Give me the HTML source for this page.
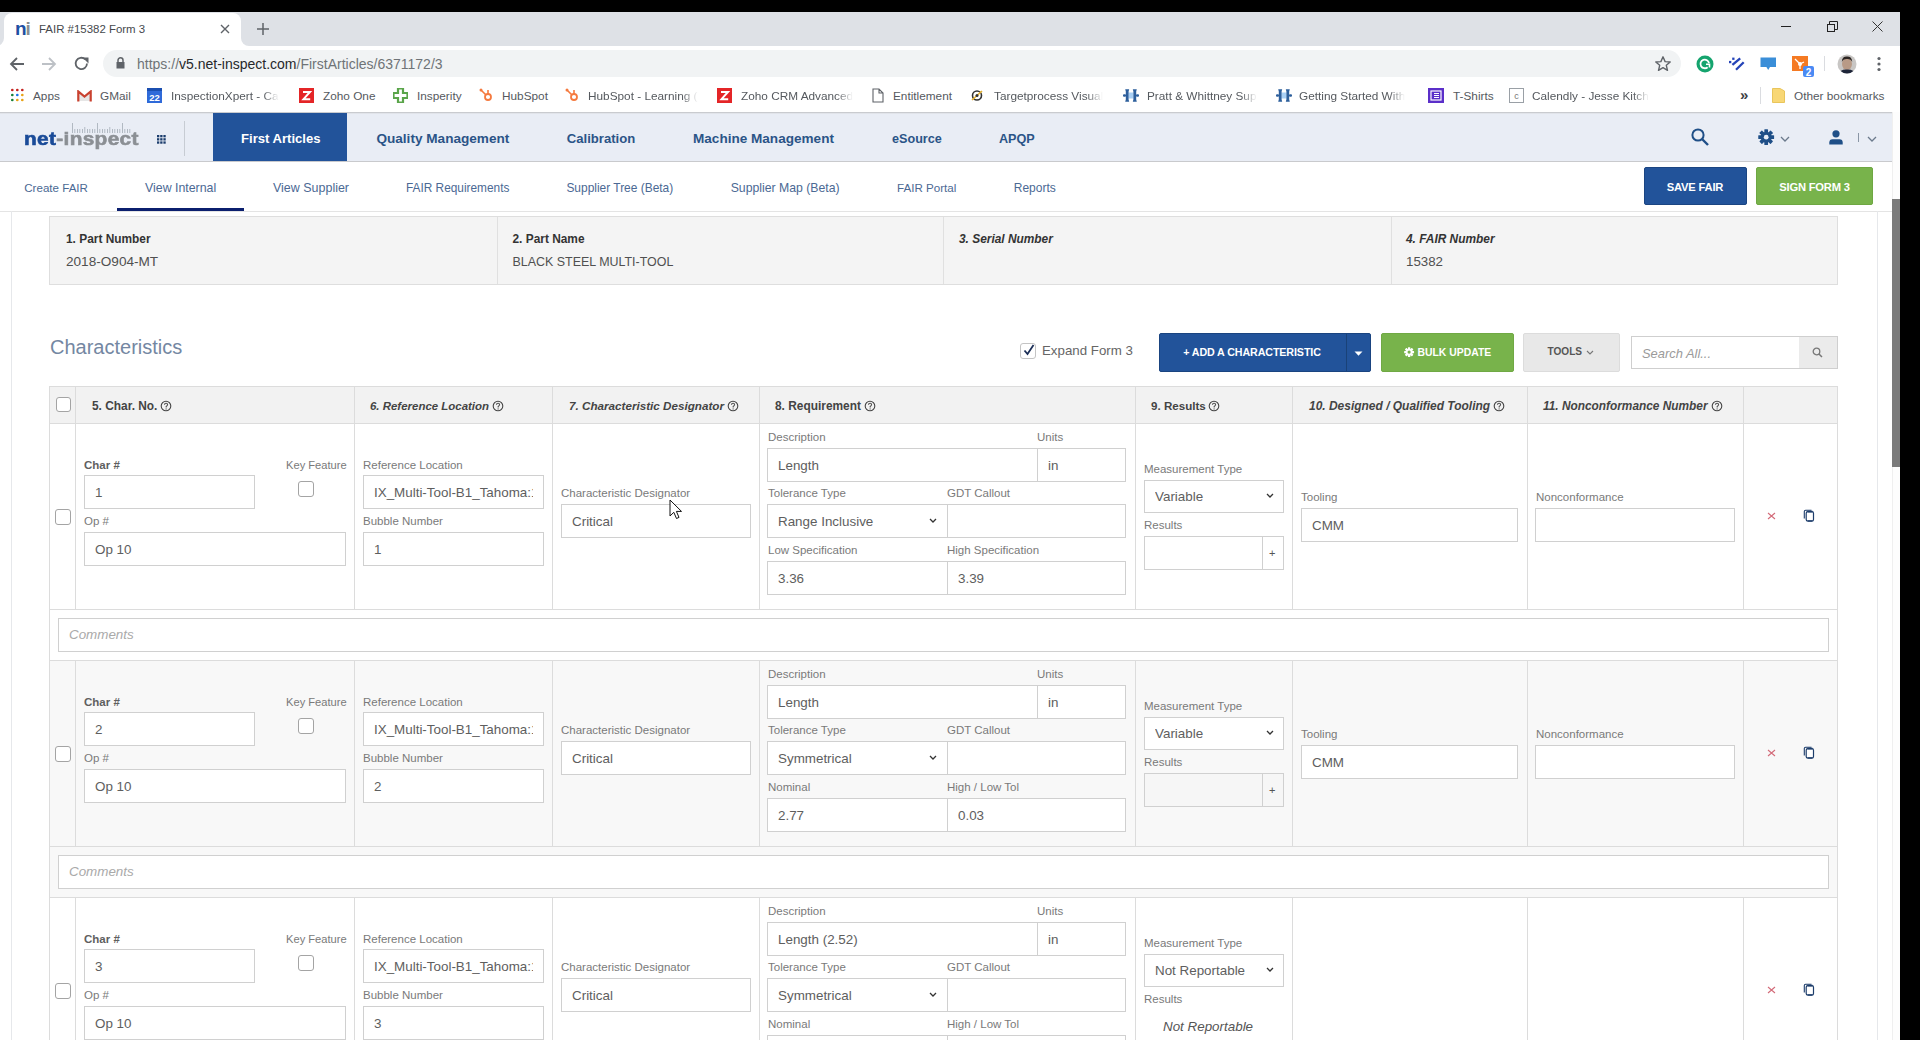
<!DOCTYPE html>
<html><head><meta charset="utf-8"><title>FAIR #15382 Form 3</title>
<style>
html,body{margin:0;padding:0;width:1920px;height:1040px;overflow:hidden;background:#000;font-family:'Liberation Sans', sans-serif;}
#r{position:relative;width:1920px;height:1040px;overflow:hidden;background:#000}
#r div{position:absolute;}
#pg{position:absolute;left:0;top:112px;width:1892px;height:928px;background:#fff}
</style></head><body><div id="r">
<div id="pg"></div>
<div style="left:0px;top:12px;width:1900px;height:34px;background:#dee1e6"></div>
<div style="left:4px;top:13px;width:237px;height:33px;background:#fff;border-radius:8px 8px 0 0"></div>
<div style="left:233px;top:37px;width:16px;height:9px;background:#fff"></div>
<div style="left:241px;top:37px;width:10px;height:9px;background:#dee1e6;border-bottom-left-radius:8px"></div>
<div style="left:0px;top:37px;width:12px;height:9px;background:#fff"></div>
<div style="left:-6px;top:37px;width:10px;height:9px;background:#dee1e6;border-bottom-right-radius:8px"></div>
<div style="left:15px;top:19.0px;line-height:20px;height:20px;font-size:19px;color:#333;font-weight:bold;font-style:normal;white-space:nowrap;letter-spacing:-1px"><span style="color:#1d4fa3">n</span><span style="color:#8a8d91">i</span></div>
<div style="left:39px;top:21.0px;line-height:16px;height:16px;font-size:11.45px;color:#45484c;font-weight:normal;font-style:normal;white-space:nowrap;">FAIR #15382 Form 3</div>
<svg style="position:absolute;left:220px;top:24px;" width="10" height="10" viewBox="0 0 10 10"><path d="M1 1L9 9M9 1L1 9" stroke="#5f6368" stroke-width="1.4"/></svg>
<svg style="position:absolute;left:257px;top:23px;" width="12" height="12" viewBox="0 0 12 12"><path d="M6 0V12M0 6H12" stroke="#5f6368" stroke-width="1.5"/></svg>
<svg style="position:absolute;left:1780px;top:20px;" width="12" height="12" viewBox="0 0 12 12"><path d="M1 6.5H11" stroke="#222" stroke-width="1"/></svg>
<svg style="position:absolute;left:1826px;top:20px;" width="13" height="13" viewBox="0 0 13 13"><rect x="1.5" y="4.5" width="7" height="7" fill="none" stroke="#222" stroke-width="1"/><path d="M3.5 4.5V1.5H11.5V9.5H8.5" fill="none" stroke="#222" stroke-width="1"/></svg>
<svg style="position:absolute;left:1872px;top:21px;" width="11" height="11" viewBox="0 0 11 11"><path d="M0.5 0.5L10.5 10.5M10.5 0.5L0.5 10.5" stroke="#333" stroke-width="1"/></svg>
<div style="left:0px;top:46px;width:1900px;height:34px;background:#fff"></div>
<svg style="position:absolute;left:9px;top:56px;" width="16" height="16" viewBox="0 0 16 16"><path d="M15 8H2M8 2L2 8L8 14" fill="none" stroke="#5f6368" stroke-width="1.8"/></svg>
<svg style="position:absolute;left:41px;top:56px;" width="16" height="16" viewBox="0 0 16 16"><path d="M1 8H14M8 2L14 8L8 14" fill="none" stroke="#bdc1c6" stroke-width="1.8"/></svg>
<svg style="position:absolute;left:73px;top:55px;" width="17" height="17" viewBox="0 0 17 17"><path d="M14 8.5A5.7 5.7 0 1 1 12.2 4.3" fill="none" stroke="#5f6368" stroke-width="1.8"/><path d="M9.5 2.5H15.5V8.5Z" fill="#5f6368"/></svg>
<div style="left:103px;top:50px;width:1578px;height:27px;background:#f1f3f4;border-radius:14px"></div>
<svg style="position:absolute;left:115px;top:56px;" width="11" height="14" viewBox="0 0 11 14"><path d="M3 6V4.2A2.5 2.5 0 0 1 8 4.2V6" fill="none" stroke="#5f6368" stroke-width="1.5"/><rect x="1.5" y="6" width="8" height="6.5" fill="#5f6368"/></svg>
<div style="left:137px;top:54.5px;line-height:18px;height:18px;font-size:14px;color:#333;font-weight:normal;font-style:normal;white-space:nowrap;"><span style="color:#6f7377">https://</span><span style="color:#26282b">v5.net-inspect.com</span><span style="color:#6f7377">/FirstArticles/6371172/3</span></div>
<svg style="position:absolute;left:1654px;top:55px;" width="18" height="18" viewBox="0 0 18 18"><path d="M9 1.8L11.1 6.6L16.2 7L12.3 10.3L13.5 15.3L9 12.6L4.5 15.3L5.7 10.3L1.8 7L6.9 6.6Z" fill="none" stroke="#5f6368" stroke-width="1.4" stroke-linejoin="round"/></svg>
<svg style="position:absolute;left:1696px;top:55px;" width="18" height="18" viewBox="0 0 18 18"><circle cx="9" cy="9" r="8.5" fill="#15a46e"/><path d="M13 8.2A4.3 4.3 0 1 0 11.6 12.2" fill="none" stroke="#fff" stroke-width="1.8"/><path d="M10 9.2H13.5V12.5" fill="none" stroke="#fff" stroke-width="1.6"/></svg>
<svg style="position:absolute;left:1728px;top:56px;" width="18" height="16" viewBox="0 0 18 16"><rect x="4.2" y="1.6" width="2.3" height="2.3" fill="#2544b8"/><rect x="1" y="4.9" width="2.3" height="2.3" fill="#2544b8"/><path d="M4.4 8.9L12.2 2.4M8 13.8L15.7 6.2" stroke="#2544b8" stroke-width="2.3"/></svg>
<svg style="position:absolute;left:1760px;top:57px;" width="17" height="14" viewBox="0 0 17 14"><path d="M0.5 0.5H16V10H10L8.2 13L6.4 10H0.5Z" fill="#3a8ed8"/></svg>
<svg style="position:absolute;left:1792px;top:56px;" width="23" height="21" viewBox="0 0 23 21"><rect x="0" y="0" width="16" height="15" fill="#f57a23"/><path d="M3 3L8 8M8 8L8 13M8 8L12 6" stroke="#fff" stroke-width="1.3"/><circle cx="8" cy="8" r="2" fill="#fff"/><rect x="11" y="10" width="11" height="11" rx="2" fill="#4a8af4"/><text x="16.5" y="19.5" font-size="10" font-weight="bold" fill="#fff" text-anchor="middle" font-family="Liberation Sans">2</text></svg>
<div style="left:1824px;top:56px;width:1px;height:15px;background:#dadce0"></div>
<svg style="position:absolute;left:1837px;top:54px;" width="20" height="20" viewBox="0 0 20 20"><defs><clipPath id="avc"><circle cx="10" cy="10" r="9.5"/></clipPath></defs><g clip-path="url(#avc)"><rect width="20" height="20" fill="#c8c6c4"/><ellipse cx="10" cy="10" rx="5" ry="6" fill="#b89a86"/><path d="M4.8 8Q5 2.5 10 2.6Q15 2.5 15.2 8Q14 4.8 10 5Q6 4.8 4.8 8Z" fill="#2b2421"/><path d="M2 20Q3 15 10 15.5Q17 15 18 20Z" fill="#1d2438"/></g></svg>
<svg style="position:absolute;left:1876px;top:56px;" width="6" height="16" viewBox="0 0 6 16"><circle cx="3" cy="2.5" r="1.6" fill="#5f6368"/><circle cx="3" cy="8" r="1.6" fill="#5f6368"/><circle cx="3" cy="13.5" r="1.6" fill="#5f6368"/></svg>
<div style="left:0px;top:80px;width:1900px;height:32px;background:#fff"></div>
<svg style="position:absolute;left:10px;top:88px;" width="15" height="14" viewBox="0 0 15 14"><circle cx="2.3" cy="2" r="1.35" fill="#c5221f"/><circle cx="7.3" cy="2" r="1.35" fill="#c5221f"/><circle cx="12.3" cy="2" r="1.35" fill="#c5221f"/><circle cx="2.3" cy="7" r="1.35" fill="#188038"/><circle cx="7.3" cy="7" r="1.35" fill="#1a73e8"/><circle cx="12.3" cy="7" r="1.35" fill="#e8a317"/><circle cx="2.3" cy="12" r="1.35" fill="#188038"/><circle cx="7.3" cy="12" r="1.35" fill="#e8a317"/><circle cx="12.3" cy="12" r="1.35" fill="#e8a317"/></svg>
<div style="left:33px;top:87.5px;line-height:16px;height:16px;font-size:11.8px;color:#55595e;font-weight:normal;font-style:normal;white-space:nowrap;">Apps</div>
<svg style="position:absolute;left:77px;top:90px;" width="15" height="12" viewBox="0 0 15 12"><path d="M2 2L7.5 6.8L13 2V11H2Z" fill="#e6e6e6"/><path d="M1.3 11.5V1.5L7.5 6.6L13.7 1.5V11.5" fill="none" stroke="#c9412f" stroke-width="2.2"/></svg>
<div style="left:100px;top:87.5px;line-height:16px;height:16px;font-size:11.8px;color:#55595e;font-weight:normal;font-style:normal;white-space:nowrap;">GMail</div>
<svg style="position:absolute;left:147px;top:88px;" width="15" height="15" viewBox="0 0 15 15"><rect x="0" y="0" width="15" height="15" fill="#2f6ad9"/><rect x="0" y="0" width="15" height="3" fill="#1b4fb0"/><text x="7.5" y="13" font-size="9.5" font-weight="bold" fill="#fff" text-anchor="middle" font-family="Liberation Sans">22</text></svg>
<div style="left:171px;top:87.5px;line-height:16px;height:16px;font-size:11.8px;color:#55595e;font-weight:normal;font-style:normal;white-space:nowrap;-webkit-mask-image:linear-gradient(90deg,#000 calc(100% - 16px),transparent);">InspectionXpert - Ca</div>
<svg style="position:absolute;left:299px;top:88px;" width="15" height="15" viewBox="0 0 15 15"><rect width="15" height="15" fill="#e42527"/><path d="M4 4H11L4.5 11.2H11.2" fill="none" stroke="#fff" stroke-width="2"/></svg>
<div style="left:323px;top:87.5px;line-height:16px;height:16px;font-size:11.8px;color:#55595e;font-weight:normal;font-style:normal;white-space:nowrap;">Zoho One</div>
<svg style="position:absolute;left:393px;top:88px;" width="15" height="15" viewBox="0 0 15 15"><path d="M5 0.5H10V5H14.5V10H10V14.5H5V10H0.5V5H5Z" fill="#fff" stroke="#5aa54a" stroke-width="2.2"/></svg>
<div style="left:417px;top:87.5px;line-height:16px;height:16px;font-size:11.8px;color:#55595e;font-weight:normal;font-style:normal;white-space:nowrap;">Insperity</div>
<svg style="position:absolute;left:479px;top:88px;" width="14" height="15" viewBox="0 0 14 15"><circle cx="9" cy="9" r="3" fill="none" stroke="#f57a3f" stroke-width="1.8"/><path d="M2 2L7 7M9 6V2" stroke="#f57a3f" stroke-width="1.6"/><circle cx="2" cy="2" r="1.5" fill="#f57a3f"/></svg>
<div style="left:502px;top:87.5px;line-height:16px;height:16px;font-size:11.8px;color:#55595e;font-weight:normal;font-style:normal;white-space:nowrap;">HubSpot</div>
<svg style="position:absolute;left:565px;top:88px;" width="14" height="15" viewBox="0 0 14 15"><circle cx="9" cy="9" r="3" fill="none" stroke="#f57a3f" stroke-width="1.8"/><path d="M2 2L7 7M9 6V2" stroke="#f57a3f" stroke-width="1.6"/><circle cx="2" cy="2" r="1.5" fill="#f57a3f"/></svg>
<div style="left:588px;top:87.5px;line-height:16px;height:16px;font-size:11.8px;color:#55595e;font-weight:normal;font-style:normal;white-space:nowrap;-webkit-mask-image:linear-gradient(90deg,#000 calc(100% - 16px),transparent);">HubSpot - Learning (</div>
<svg style="position:absolute;left:717px;top:88px;" width="15" height="15" viewBox="0 0 15 15"><rect width="15" height="15" fill="#e42527"/><path d="M4 4H11L4.5 11.2H11.2" fill="none" stroke="#fff" stroke-width="2"/></svg>
<div style="left:741px;top:87.5px;line-height:16px;height:16px;font-size:11.8px;color:#55595e;font-weight:normal;font-style:normal;white-space:nowrap;-webkit-mask-image:linear-gradient(90deg,#000 calc(100% - 16px),transparent);">Zoho CRM Advanced</div>
<svg style="position:absolute;left:872px;top:88px;" width="12" height="15" viewBox="0 0 12 15"><path d="M1 1H7L11 5V14H1Z M7 1V5H11" fill="none" stroke="#5f6368" stroke-width="1.1"/></svg>
<div style="left:893px;top:87.5px;line-height:16px;height:16px;font-size:11.8px;color:#55595e;font-weight:normal;font-style:normal;white-space:nowrap;">Entitlement</div>
<svg style="position:absolute;left:969px;top:88px;" width="15" height="15" viewBox="0 0 15 15"><circle cx="8" cy="7.5" r="4.5" fill="none" stroke="#333" stroke-width="1.6"/><path d="M3 12L13 3" stroke="#e8b32e" stroke-width="1.6"/><circle cx="8" cy="7.5" r="1.5" fill="#333"/></svg>
<div style="left:994px;top:87.5px;line-height:16px;height:16px;font-size:11.8px;color:#55595e;font-weight:normal;font-style:normal;white-space:nowrap;-webkit-mask-image:linear-gradient(90deg,#000 calc(100% - 16px),transparent);">Targetprocess Visual</div>
<svg style="position:absolute;left:1123px;top:89px;" width="16" height="13" viewBox="0 0 16 13"><rect x="5.5" y="3.5" width="5" height="6" fill="#a9d0f5"/><path d="M2.2 0.3H6.2L5.6 2.5V10.5L6.2 12.7H2.2L2.8 10.5V2.5Z" fill="#2d5f9c"/><path d="M9.8 0.3H13.8L13.2 2.5V10.5L13.8 12.7H9.8L10.4 10.5V2.5Z" fill="#2d5f9c"/><rect x="0" y="5.2" width="3" height="2.6" rx="1" fill="#2d5f9c"/><rect x="13" y="5.2" width="3" height="2.6" rx="1" fill="#2d5f9c"/></svg>
<div style="left:1147px;top:87.5px;line-height:16px;height:16px;font-size:11.8px;color:#55595e;font-weight:normal;font-style:normal;white-space:nowrap;-webkit-mask-image:linear-gradient(90deg,#000 calc(100% - 16px),transparent);">Pratt &amp; Whittney Sup</div>
<svg style="position:absolute;left:1276px;top:89px;" width="16" height="13" viewBox="0 0 16 13"><rect x="5.5" y="3.5" width="5" height="6" fill="#a9d0f5"/><path d="M2.2 0.3H6.2L5.6 2.5V10.5L6.2 12.7H2.2L2.8 10.5V2.5Z" fill="#2d5f9c"/><path d="M9.8 0.3H13.8L13.2 2.5V10.5L13.8 12.7H9.8L10.4 10.5V2.5Z" fill="#2d5f9c"/><rect x="0" y="5.2" width="3" height="2.6" rx="1" fill="#2d5f9c"/><rect x="13" y="5.2" width="3" height="2.6" rx="1" fill="#2d5f9c"/></svg>
<div style="left:1299px;top:87.5px;line-height:16px;height:16px;font-size:11.8px;color:#55595e;font-weight:normal;font-style:normal;white-space:nowrap;-webkit-mask-image:linear-gradient(90deg,#000 calc(100% - 16px),transparent);">Getting Started With</div>
<svg style="position:absolute;left:1428px;top:88px;" width="16" height="15" viewBox="0 0 16 15"><rect width="16" height="15" fill="#5b2fc9"/><rect x="3" y="3" width="10" height="9" fill="none" stroke="#fff" stroke-width="1.2"/><path d="M6 5.5H11M6 7.5H11M6 9.5H11" stroke="#fff" stroke-width="1"/></svg>
<div style="left:1453px;top:87.5px;line-height:16px;height:16px;font-size:11.8px;color:#55595e;font-weight:normal;font-style:normal;white-space:nowrap;">T-Shirts</div>
<svg style="position:absolute;left:1509px;top:88px;" width="15" height="15" viewBox="0 0 15 15"><rect x="0.5" y="0.5" width="14" height="14" fill="none" stroke="#9aa0a6" stroke-width="1"/><text x="7.5" y="11" font-size="9" fill="#777" text-anchor="middle" font-family="Liberation Sans">c</text></svg>
<div style="left:1532px;top:87.5px;line-height:16px;height:16px;font-size:11.8px;color:#55595e;font-weight:normal;font-style:normal;white-space:nowrap;-webkit-mask-image:linear-gradient(90deg,#000 calc(100% - 16px),transparent);">Calendly - Jesse Kitch</div>
<div style="left:1740px;top:87.0px;line-height:16px;height:16px;font-size:15px;color:#3c4043;font-weight:bold;font-style:normal;white-space:nowrap;">&raquo;</div>
<div style="left:1760px;top:87px;width:1px;height:17px;background:#dadce0"></div>
<svg style="position:absolute;left:1772px;top:88px;" width="13" height="15" viewBox="0 0 13 15"><path d="M0.5 0.5H8L12.5 3V14.5H0.5Z" fill="#f8d775" stroke="#e9c55b" stroke-width="1"/></svg>
<div style="left:1794px;top:87.5px;line-height:16px;height:16px;font-size:11.8px;color:#55595e;font-weight:normal;font-style:normal;white-space:nowrap;">Other bookmarks</div>
<div style="left:0px;top:112px;width:1892px;height:50px;background:#e9edf5;border-top:1px solid #c9cbcf;border-bottom:1px solid #c9cacd;box-sizing:border-box;box-shadow:inset 0 1px 0 #e1e4ea"></div>
<svg style="position:absolute;left:70px;top:123px;" width="62" height="10" viewBox="0 0 62 10"><rect x="2.0" y="0" width="0.7" height="10" fill="#9aa3ad"/><rect x="4.5" y="6" width="0.7" height="4" fill="#9aa3ad"/><rect x="7.0" y="6" width="0.7" height="4" fill="#9aa3ad"/><rect x="9.5" y="6" width="0.7" height="4" fill="#9aa3ad"/><rect x="12.0" y="6" width="0.7" height="4" fill="#9aa3ad"/><rect x="14.5" y="4" width="0.7" height="6" fill="#9aa3ad"/><rect x="17.0" y="6" width="0.7" height="4" fill="#9aa3ad"/><rect x="19.5" y="6" width="0.7" height="4" fill="#9aa3ad"/><rect x="22.0" y="6" width="0.7" height="4" fill="#9aa3ad"/><rect x="24.5" y="6" width="0.7" height="4" fill="#9aa3ad"/><rect x="27.0" y="0" width="0.7" height="10" fill="#9aa3ad"/><rect x="29.5" y="6" width="0.7" height="4" fill="#9aa3ad"/><rect x="32.0" y="6" width="0.7" height="4" fill="#9aa3ad"/><rect x="34.5" y="6" width="0.7" height="4" fill="#9aa3ad"/><rect x="37.0" y="6" width="0.7" height="4" fill="#9aa3ad"/><rect x="39.5" y="4" width="0.7" height="6" fill="#9aa3ad"/><rect x="42.0" y="6" width="0.7" height="4" fill="#9aa3ad"/><rect x="44.5" y="6" width="0.7" height="4" fill="#9aa3ad"/><rect x="47.0" y="6" width="0.7" height="4" fill="#9aa3ad"/><rect x="49.5" y="6" width="0.7" height="4" fill="#9aa3ad"/><rect x="52.0" y="0" width="0.7" height="10" fill="#9aa3ad"/><rect x="54.5" y="6" width="0.7" height="4" fill="#9aa3ad"/><rect x="57.0" y="6" width="0.7" height="4" fill="#9aa3ad"/><rect x="59.5" y="6" width="0.7" height="4" fill="#9aa3ad"/></svg>
<div style="left:24px;top:127.0px;line-height:24px;height:24px;font-size:18.6px;color:#333;font-weight:bold;font-style:normal;white-space:nowrap;letter-spacing:0.3px;transform:scaleX(1.12);transform-origin:0 50%;-webkit-text-stroke:0.5px currentColor"><span style="color:#1a4b98;-webkit-text-stroke:0.6px #1a4b98">net</span><span style="color:#8b8f94;-webkit-text-stroke:0.6px #8b8f94">-inspect</span></div>
<svg style="position:absolute;left:157px;top:135px;" width="10" height="10" viewBox="0 0 10 10"><rect x="0.0" y="0.0" width="2.3" height="2.3" fill="#1b3d6d"/><rect x="3.2" y="0.0" width="2.3" height="2.3" fill="#1b3d6d"/><rect x="6.4" y="0.0" width="2.3" height="2.3" fill="#1b3d6d"/><rect x="0.0" y="3.2" width="2.3" height="2.3" fill="#1b3d6d"/><rect x="3.2" y="3.2" width="2.3" height="2.3" fill="#1b3d6d"/><rect x="6.4" y="3.2" width="2.3" height="2.3" fill="#1b3d6d"/><rect x="0.0" y="6.4" width="2.3" height="2.3" fill="#1b3d6d"/><rect x="3.2" y="6.4" width="2.3" height="2.3" fill="#1b3d6d"/><rect x="6.4" y="6.4" width="2.3" height="2.3" fill="#1b3d6d"/></svg>
<div style="left:184px;top:121px;width:1px;height:35px;background:#c7ccd3"></div>
<div style="left:213px;top:113px;width:134px;height:48px;background:#22539a"></div>
<div style="left:241px;top:129.7px;line-height:18px;height:18px;font-size:13.1px;color:#fff;font-weight:bold;font-style:normal;white-space:nowrap;">First Articles</div>
<div style="left:376.4px;top:129.7px;line-height:18px;height:18px;font-size:13.6px;color:#2b5487;font-weight:bold;font-style:normal;white-space:nowrap;">Quality Management</div>
<div style="left:566.8px;top:129.7px;line-height:18px;height:18px;font-size:13.12px;color:#2b5487;font-weight:bold;font-style:normal;white-space:nowrap;">Calibration</div>
<div style="left:693px;top:129.7px;line-height:18px;height:18px;font-size:13.57px;color:#2b5487;font-weight:bold;font-style:normal;white-space:nowrap;">Machine Management</div>
<div style="left:892px;top:129.7px;line-height:18px;height:18px;font-size:12.62px;color:#2b5487;font-weight:bold;font-style:normal;white-space:nowrap;">eSource</div>
<div style="left:999px;top:129.7px;line-height:18px;height:18px;font-size:12.63px;color:#2b5487;font-weight:bold;font-style:normal;white-space:nowrap;">APQP</div>
<svg style="position:absolute;left:1691px;top:128px;" width="19" height="19" viewBox="0 0 19 19"><circle cx="7" cy="7" r="5.6" fill="none" stroke="#1f4f87" stroke-width="2"/><path d="M11 11L17 17" stroke="#1f4f87" stroke-width="2.4"/></svg>
<svg style="position:absolute;left:1758px;top:128.5px;" width="19" height="19" viewBox="0 0 19 19"><g transform="scale(0.88)"><rect x="7.2" y="0.3" width="4.2" height="4" rx="0.6" fill="#1f4f87" transform="rotate(0 9.3 9.3)"/><rect x="7.2" y="0.3" width="4.2" height="4" rx="0.6" fill="#1f4f87" transform="rotate(45 9.3 9.3)"/><rect x="7.2" y="0.3" width="4.2" height="4" rx="0.6" fill="#1f4f87" transform="rotate(90 9.3 9.3)"/><rect x="7.2" y="0.3" width="4.2" height="4" rx="0.6" fill="#1f4f87" transform="rotate(135 9.3 9.3)"/><rect x="7.2" y="0.3" width="4.2" height="4" rx="0.6" fill="#1f4f87" transform="rotate(180 9.3 9.3)"/><rect x="7.2" y="0.3" width="4.2" height="4" rx="0.6" fill="#1f4f87" transform="rotate(225 9.3 9.3)"/><rect x="7.2" y="0.3" width="4.2" height="4" rx="0.6" fill="#1f4f87" transform="rotate(270 9.3 9.3)"/><rect x="7.2" y="0.3" width="4.2" height="4" rx="0.6" fill="#1f4f87" transform="rotate(315 9.3 9.3)"/><circle cx="9.3" cy="9.3" r="6.3" fill="#1f4f87"/><circle cx="9.3" cy="9.3" r="2.7" fill="#e9eef5"/></g></svg>
<svg style="position:absolute;left:1780px;top:136px;" width="10" height="6" viewBox="0 0 10 6"><path d="M1 1L5 5L9 1" fill="none" stroke="#6b7a8c" stroke-width="1.3"/></svg>
<svg style="position:absolute;left:1828px;top:129px;" width="16" height="16" viewBox="0 0 16 16"><circle cx="8" cy="4.8" r="3.6" fill="#1f4f87"/><path d="M1.3 15.5V13.6Q1.3 10.2 4.5 10.2H11.5Q14.7 10.2 14.7 13.6V15.5Z" fill="#1f4f87"/></svg>
<div style="left:1858px;top:133px;width:1px;height:9px;background:#8a96a5"></div>
<svg style="position:absolute;left:1867px;top:136px;" width="10" height="6" viewBox="0 0 10 6"><path d="M1 1L5 5L9 1" fill="none" stroke="#6b7a8c" stroke-width="1.3"/></svg>
<div style="left:0px;top:162px;width:1892px;height:50px;background:#fff;border-bottom:1px solid #e4e4e4;box-sizing:border-box"></div>
<div style="left:24.25px;top:179.8px;line-height:16px;height:16px;font-size:11.59px;color:#4b6994;font-weight:normal;font-style:normal;white-space:nowrap;">Create FAIR</div>
<div style="left:145px;top:179.8px;line-height:16px;height:16px;font-size:12.36px;color:#4b6994;font-weight:normal;font-style:normal;white-space:nowrap;">View Internal</div>
<div style="left:273px;top:179.8px;line-height:16px;height:16px;font-size:12.47px;color:#4b6994;font-weight:normal;font-style:normal;white-space:nowrap;">View Supplier</div>
<div style="left:406px;top:179.8px;line-height:16px;height:16px;font-size:11.85px;color:#4b6994;font-weight:normal;font-style:normal;white-space:nowrap;">FAIR Requirements</div>
<div style="left:566.4px;top:179.8px;line-height:16px;height:16px;font-size:11.95px;color:#4b6994;font-weight:normal;font-style:normal;white-space:nowrap;">Supplier Tree (Beta)</div>
<div style="left:730.7px;top:179.8px;line-height:16px;height:16px;font-size:12.25px;color:#4b6994;font-weight:normal;font-style:normal;white-space:nowrap;">Supplier Map (Beta)</div>
<div style="left:897px;top:179.8px;line-height:16px;height:16px;font-size:11.62px;color:#4b6994;font-weight:normal;font-style:normal;white-space:nowrap;">FAIR Portal</div>
<div style="left:1013.8px;top:179.8px;line-height:16px;height:16px;font-size:11.99px;color:#4b6994;font-weight:normal;font-style:normal;white-space:nowrap;">Reports</div>
<div style="left:117px;top:208px;width:127px;height:3px;background:#0b1f6e"></div>
<div style="left:1643.5px;top:167px;width:103px;height:38px;background:#22539a;border:1px solid #1b4582;box-sizing:border-box;border-radius:2px"></div>
<div style="left:1643.5px;top:178.8px;line-height:16px;height:16px;font-size:11.2px;color:#fff;font-weight:bold;font-style:normal;white-space:nowrap;width:103px;text-align:center;letter-spacing:-0.2px">SAVE FAIR</div>
<div style="left:1756px;top:167px;width:117px;height:38px;background:#78b34b;border:1px solid #6ea742;box-sizing:border-box;border-radius:2px"></div>
<div style="left:1756px;top:178.8px;line-height:16px;height:16px;font-size:11.2px;color:#fff;font-weight:bold;font-style:normal;white-space:nowrap;width:117px;text-align:center;letter-spacing:-0.2px">SIGN FORM 3</div>
<div style="left:1892px;top:112px;width:8px;height:928px;background:#fdfdfd;box-shadow:inset 1px 0 0 #efefef"></div>
<div style="left:1892px;top:199px;width:8px;height:268px;background:#7b7b7b"></div>
<div style="left:11px;top:211px;width:1px;height:829px;background:#e6e8eb"></div>
<div style="left:1877px;top:211px;width:1px;height:829px;background:#e6e8eb"></div>
<div style="left:49px;top:216px;width:1789px;height:69px;background:#f4f4f4;border:1px solid #dedede;box-sizing:border-box"></div>
<div style="left:497px;top:217px;width:1px;height:67px;background:#e0e0e0"></div>
<div style="left:943px;top:217px;width:1px;height:67px;background:#e0e0e0"></div>
<div style="left:1391px;top:217px;width:1px;height:67px;background:#e0e0e0"></div>
<div style="left:66px;top:231.0px;line-height:16px;height:16px;font-size:11.9px;color:#333;font-weight:bold;font-style:normal;white-space:nowrap;">1. Part Number</div>
<div style="left:66px;top:254.0px;line-height:16px;height:16px;font-size:13.6px;color:#505050;font-weight:normal;font-style:normal;white-space:nowrap;">2018-O904-MT</div>
<div style="left:512.5px;top:231.0px;line-height:16px;height:16px;font-size:11.9px;color:#333;font-weight:bold;font-style:normal;white-space:nowrap;">2. Part Name</div>
<div style="left:512.5px;top:254.0px;line-height:16px;height:16px;font-size:12.45px;color:#505050;font-weight:normal;font-style:normal;white-space:nowrap;">BLACK STEEL MULTI-TOOL</div>
<div style="left:959px;top:231.0px;line-height:16px;height:16px;font-size:11.9px;color:#333;font-weight:bold;font-style:italic;white-space:nowrap;">3. Serial Number</div>
<div style="left:1406px;top:231.0px;line-height:16px;height:16px;font-size:11.9px;color:#333;font-weight:bold;font-style:italic;white-space:nowrap;">4. FAIR Number</div>
<div style="left:1406px;top:254.0px;line-height:16px;height:16px;font-size:13.3px;color:#505050;font-weight:normal;font-style:normal;white-space:nowrap;">15382</div>
<div style="left:50px;top:334.0px;line-height:26px;height:26px;font-size:20px;color:#7487a2;font-weight:normal;font-style:normal;white-space:nowrap;">Characteristics</div>
<div style="left:1020px;top:343px;width:16px;height:16px;background:#fff;border:1px solid #c4c4c4;border-radius:3px;box-sizing:border-box"></div>
<svg style="position:absolute;left:1022px;top:342px;" width="14" height="15" viewBox="0 0 14 15"><path d="M2.5 8.5L5.5 12L11.5 3" fill="none" stroke="#1c2f58" stroke-width="1.8"/></svg>
<div style="left:1042px;top:342.0px;line-height:18px;height:18px;font-size:13.3px;color:#666;font-weight:normal;font-style:normal;white-space:nowrap;">Expand Form 3</div>
<div style="left:1158.5px;top:333px;width:212.5px;height:38.5px;background:#22539a;border:1px solid #1a4480;box-sizing:border-box;border-radius:2px"></div>
<div style="left:1345.5px;top:334px;width:1px;height:36.5px;background:#1a4278"></div>
<div style="left:1158.5px;top:345.0px;line-height:14px;height:14px;font-size:10.7px;color:#fff;font-weight:bold;font-style:normal;white-space:nowrap;width:187px;text-align:center;letter-spacing:-0.1px">+ ADD A CHARACTERISTIC</div>
<svg style="position:absolute;left:1354px;top:351px;" width="9" height="5" viewBox="0 0 9 5"><path d="M0.5 0.5H8.5L4.5 4.8Z" fill="#fff"/></svg>
<div style="left:1380.5px;top:333px;width:133.5px;height:38.5px;background:#78b34b;border:1px solid #70a944;box-sizing:border-box;border-radius:2px"></div>
<svg style="position:absolute;left:1404px;top:347px;" width="11" height="11" viewBox="0 0 11 11"><g transform="scale(0.55)"><rect x="7.2" y="0.3" width="4.2" height="4" rx="0.6" fill="#fff" transform="rotate(0 9.3 9.3)"/><rect x="7.2" y="0.3" width="4.2" height="4" rx="0.6" fill="#fff" transform="rotate(45 9.3 9.3)"/><rect x="7.2" y="0.3" width="4.2" height="4" rx="0.6" fill="#fff" transform="rotate(90 9.3 9.3)"/><rect x="7.2" y="0.3" width="4.2" height="4" rx="0.6" fill="#fff" transform="rotate(135 9.3 9.3)"/><rect x="7.2" y="0.3" width="4.2" height="4" rx="0.6" fill="#fff" transform="rotate(180 9.3 9.3)"/><rect x="7.2" y="0.3" width="4.2" height="4" rx="0.6" fill="#fff" transform="rotate(225 9.3 9.3)"/><rect x="7.2" y="0.3" width="4.2" height="4" rx="0.6" fill="#fff" transform="rotate(270 9.3 9.3)"/><rect x="7.2" y="0.3" width="4.2" height="4" rx="0.6" fill="#fff" transform="rotate(315 9.3 9.3)"/><circle cx="9.3" cy="9.3" r="6.3" fill="#fff"/><circle cx="9.3" cy="9.3" r="2.9" fill="#78b34b"/></g></svg>
<div style="left:1417.5px;top:345.7px;line-height:14px;height:14px;font-size:10.4px;color:#fff;font-weight:bold;font-style:normal;white-space:nowrap;">BULK UPDATE</div>
<div style="left:1523px;top:333px;width:96.5px;height:38.5px;background:#e8e8e8;border:1px solid #dcdcdc;box-sizing:border-box;border-radius:2px"></div>
<div style="left:1547.5px;top:345.0px;line-height:14px;height:14px;font-size:10.1px;color:#555;font-weight:bold;font-style:normal;white-space:nowrap;">TOOLS</div>
<svg style="position:absolute;left:1586px;top:350px;" width="8" height="5" viewBox="0 0 8 5"><path d="M1 1L4 4L7 1" fill="none" stroke="#777" stroke-width="1.1"/></svg>
<div style="left:1630.5px;top:335.5px;width:169px;height:33px;background:#fff;border:1px solid #cfcfcf;box-sizing:border-box"></div>
<div style="left:1642px;top:345.0px;line-height:18px;height:18px;font-size:12.9px;color:#9a9a9a;font-weight:normal;font-style:italic;white-space:nowrap;">Search All...</div>
<div style="left:1799px;top:335.5px;width:39px;height:33px;background:#ebebeb;border:1px solid #cfcfcf;border-left:none;box-sizing:border-box"></div>
<svg style="position:absolute;left:1812px;top:347px;" width="11" height="11" viewBox="0 0 11 11"><circle cx="4.5" cy="4.5" r="3.3" fill="none" stroke="#777" stroke-width="1.3"/><path d="M7 7L10 10" stroke="#777" stroke-width="1.5"/></svg>
<div style="left:49px;top:386px;width:1789px;height:38px;background:#f2f2f2;border:1px solid #dcdcdc;box-sizing:border-box"></div>
<div style="left:75px;top:387px;width:1px;height:37px;background:#dcdcdc"></div>
<div style="left:354px;top:387px;width:1px;height:37px;background:#dcdcdc"></div>
<div style="left:552px;top:387px;width:1px;height:37px;background:#dcdcdc"></div>
<div style="left:759px;top:387px;width:1px;height:37px;background:#dcdcdc"></div>
<div style="left:1135px;top:387px;width:1px;height:37px;background:#dcdcdc"></div>
<div style="left:1292px;top:387px;width:1px;height:37px;background:#dcdcdc"></div>
<div style="left:1527px;top:387px;width:1px;height:37px;background:#dcdcdc"></div>
<div style="left:1743px;top:387px;width:1px;height:37px;background:#dcdcdc"></div>
<div style="left:56px;top:397px;width:15px;height:15px;background:#fff;border:1px solid #a4a4a4;border-radius:3px;box-sizing:border-box"></div>
<div style="left:92px;top:398.0px;line-height:16px;height:16px;font-size:11.9px;color:#444;font-weight:bold;font-style:normal;white-space:nowrap;">5. Char. No.</div>
<svg style="position:absolute;left:159.5px;top:400px;" width="12" height="12" viewBox="0 0 12 12"><circle cx="6" cy="6" r="4.8" fill="none" stroke="#444" stroke-width="1.1"/><path d="M4.5 4.8Q4.5 3.3 6.1 3.3Q7.6 3.3 7.6 4.6Q7.6 5.6 6.2 6.4V7.6" fill="none" stroke="#555" stroke-width="1.1"/><circle cx="6.1" cy="8.9" r="0.6" fill="#555"/></svg>
<div style="left:370px;top:398.0px;line-height:16px;height:16px;font-size:11.46px;color:#444;font-weight:bold;font-style:italic;white-space:nowrap;">6. Reference Location</div>
<svg style="position:absolute;left:492px;top:400px;" width="12" height="12" viewBox="0 0 12 12"><circle cx="6" cy="6" r="4.8" fill="none" stroke="#444" stroke-width="1.1"/><path d="M4.5 4.8Q4.5 3.3 6.1 3.3Q7.6 3.3 7.6 4.6Q7.6 5.6 6.2 6.4V7.6" fill="none" stroke="#555" stroke-width="1.1"/><circle cx="6.1" cy="8.9" r="0.6" fill="#555"/></svg>
<div style="left:569px;top:398.0px;line-height:16px;height:16px;font-size:11.68px;color:#444;font-weight:bold;font-style:italic;white-space:nowrap;">7. Characteristic Designator</div>
<svg style="position:absolute;left:727.2px;top:400px;" width="12" height="12" viewBox="0 0 12 12"><circle cx="6" cy="6" r="4.8" fill="none" stroke="#444" stroke-width="1.1"/><path d="M4.5 4.8Q4.5 3.3 6.1 3.3Q7.6 3.3 7.6 4.6Q7.6 5.6 6.2 6.4V7.6" fill="none" stroke="#555" stroke-width="1.1"/><circle cx="6.1" cy="8.9" r="0.6" fill="#555"/></svg>
<div style="left:775px;top:398.0px;line-height:16px;height:16px;font-size:11.9px;color:#444;font-weight:bold;font-style:normal;white-space:nowrap;">8. Requirement</div>
<svg style="position:absolute;left:863.8px;top:400px;" width="12" height="12" viewBox="0 0 12 12"><circle cx="6" cy="6" r="4.8" fill="none" stroke="#444" stroke-width="1.1"/><path d="M4.5 4.8Q4.5 3.3 6.1 3.3Q7.6 3.3 7.6 4.6Q7.6 5.6 6.2 6.4V7.6" fill="none" stroke="#555" stroke-width="1.1"/><circle cx="6.1" cy="8.9" r="0.6" fill="#555"/></svg>
<div style="left:1151px;top:398.0px;line-height:16px;height:16px;font-size:11.6px;color:#444;font-weight:bold;font-style:normal;white-space:nowrap;">9. Results</div>
<svg style="position:absolute;left:1207.6px;top:400px;" width="12" height="12" viewBox="0 0 12 12"><circle cx="6" cy="6" r="4.8" fill="none" stroke="#444" stroke-width="1.1"/><path d="M4.5 4.8Q4.5 3.3 6.1 3.3Q7.6 3.3 7.6 4.6Q7.6 5.6 6.2 6.4V7.6" fill="none" stroke="#555" stroke-width="1.1"/><circle cx="6.1" cy="8.9" r="0.6" fill="#555"/></svg>
<div style="left:1309px;top:398.0px;line-height:16px;height:16px;font-size:11.97px;color:#444;font-weight:bold;font-style:italic;white-space:nowrap;">10. Designed / Qualified Tooling</div>
<svg style="position:absolute;left:1493.3px;top:400px;" width="12" height="12" viewBox="0 0 12 12"><circle cx="6" cy="6" r="4.8" fill="none" stroke="#444" stroke-width="1.1"/><path d="M4.5 4.8Q4.5 3.3 6.1 3.3Q7.6 3.3 7.6 4.6Q7.6 5.6 6.2 6.4V7.6" fill="none" stroke="#555" stroke-width="1.1"/><circle cx="6.1" cy="8.9" r="0.6" fill="#555"/></svg>
<div style="left:1543px;top:398.0px;line-height:16px;height:16px;font-size:11.86px;color:#444;font-weight:bold;font-style:italic;white-space:nowrap;">11. Nonconformance Number</div>
<svg style="position:absolute;left:1710.5px;top:400px;" width="12" height="12" viewBox="0 0 12 12"><circle cx="6" cy="6" r="4.8" fill="none" stroke="#444" stroke-width="1.1"/><path d="M4.5 4.8Q4.5 3.3 6.1 3.3Q7.6 3.3 7.6 4.6Q7.6 5.6 6.2 6.4V7.6" fill="none" stroke="#555" stroke-width="1.1"/><circle cx="6.1" cy="8.9" r="0.6" fill="#555"/></svg>
<div style="left:49px;top:424px;width:1789px;height:186px;background:#fff;border-left:1px solid #dcdcdc;border-right:1px solid #dcdcdc;border-bottom:1px solid #dcdcdc;box-sizing:border-box"></div>
<div style="left:75px;top:424px;width:1px;height:186px;background:#dcdcdc"></div>
<div style="left:354px;top:424px;width:1px;height:186px;background:#dcdcdc"></div>
<div style="left:552px;top:424px;width:1px;height:186px;background:#dcdcdc"></div>
<div style="left:759px;top:424px;width:1px;height:186px;background:#dcdcdc"></div>
<div style="left:1135px;top:424px;width:1px;height:186px;background:#dcdcdc"></div>
<div style="left:1292px;top:424px;width:1px;height:186px;background:#dcdcdc"></div>
<div style="left:1527px;top:424px;width:1px;height:186px;background:#dcdcdc"></div>
<div style="left:1743px;top:424px;width:1px;height:186px;background:#dcdcdc"></div>
<div style="left:55px;top:509px;width:16px;height:16px;background:#fff;border:1px solid #a4a4a4;border-radius:3px;box-sizing:border-box"></div>
<div style="left:84px;top:458.1px;line-height:15px;height:15px;font-size:11.5px;color:#5f5f5f;font-weight:bold;font-style:normal;white-space:nowrap;">Char #</div>
<div style="left:286px;top:458.1px;line-height:15px;height:15px;font-size:11.15px;color:#7a7a7a;font-weight:normal;font-style:normal;white-space:nowrap;">Key Feature</div>
<div style="left:84px;top:475px;width:171px;height:34px;background:#fff;border:1px solid #d0d0d0;box-sizing:border-box;"></div>
<div style="left:95px;top:483.6px;line-height:18px;height:18px;font-size:13.4px;color:#5e5e5e;font-weight:normal;font-style:normal;white-space:nowrap;overflow:hidden;width:153px">1</div>
<div style="left:298px;top:481px;width:16px;height:16px;background:#fff;border:1px solid #a4a4a4;border-radius:3px;box-sizing:border-box"></div>
<div style="left:84px;top:514.1px;line-height:15px;height:15px;font-size:11.5px;color:#7a7a7a;font-weight:normal;font-style:normal;white-space:nowrap;">Op #</div>
<div style="left:84px;top:532px;width:262px;height:34px;background:#fff;border:1px solid #d0d0d0;box-sizing:border-box;"></div>
<div style="left:95px;top:540.6px;line-height:18px;height:18px;font-size:13.4px;color:#5e5e5e;font-weight:normal;font-style:normal;white-space:nowrap;overflow:hidden;width:244px">Op 10</div>
<div style="left:363px;top:458.1px;line-height:15px;height:15px;font-size:11.5px;color:#7a7a7a;font-weight:normal;font-style:normal;white-space:nowrap;">Reference Location</div>
<div style="left:363px;top:475px;width:181px;height:34px;background:#fff;border:1px solid #d0d0d0;box-sizing:border-box;"></div>
<div style="left:374px;top:483.6px;line-height:18px;height:18px;font-size:13.4px;color:#5e5e5e;font-weight:normal;font-style:normal;white-space:nowrap;overflow:hidden;width:159px">IX_Multi-Tool-B1_Tahoma:1</div>
<div style="left:363px;top:514.1px;line-height:15px;height:15px;font-size:11.5px;color:#7a7a7a;font-weight:normal;font-style:normal;white-space:nowrap;">Bubble Number</div>
<div style="left:363px;top:532px;width:181px;height:34px;background:#fff;border:1px solid #d0d0d0;box-sizing:border-box;"></div>
<div style="left:374px;top:540.6px;line-height:18px;height:18px;font-size:13.4px;color:#5e5e5e;font-weight:normal;font-style:normal;white-space:nowrap;overflow:hidden;width:163px">1</div>
<div style="left:561px;top:486.1px;line-height:15px;height:15px;font-size:11.5px;color:#7a7a7a;font-weight:normal;font-style:normal;white-space:nowrap;">Characteristic Designator</div>
<div style="left:561px;top:504px;width:190px;height:34px;background:#fff;border:1px solid #d0d0d0;box-sizing:border-box;"></div>
<div style="left:572px;top:512.6px;line-height:18px;height:18px;font-size:13.4px;color:#5e5e5e;font-weight:normal;font-style:normal;white-space:nowrap;overflow:hidden;width:172px">Critical</div>
<div style="left:768px;top:430.1px;line-height:15px;height:15px;font-size:11.5px;color:#7a7a7a;font-weight:normal;font-style:normal;white-space:nowrap;">Description</div>
<div style="left:1037px;top:430.1px;line-height:15px;height:15px;font-size:11.5px;color:#7a7a7a;font-weight:normal;font-style:normal;white-space:nowrap;">Units</div>
<div style="left:767px;top:448px;width:271px;height:34px;background:#fff;border:1px solid #d0d0d0;box-sizing:border-box;"></div>
<div style="left:778px;top:456.6px;line-height:18px;height:18px;font-size:13.4px;color:#5e5e5e;font-weight:normal;font-style:normal;white-space:nowrap;overflow:hidden;width:253px">Length</div>
<div style="left:1037px;top:448px;width:89px;height:34px;background:#fff;border:1px solid #d0d0d0;box-sizing:border-box;"></div>
<div style="left:1048px;top:456.6px;line-height:18px;height:18px;font-size:13.4px;color:#5e5e5e;font-weight:normal;font-style:normal;white-space:nowrap;overflow:hidden;width:71px">in</div>
<div style="left:768px;top:486.1px;line-height:15px;height:15px;font-size:11.5px;color:#7a7a7a;font-weight:normal;font-style:normal;white-space:nowrap;">Tolerance Type</div>
<div style="left:947px;top:486.1px;line-height:15px;height:15px;font-size:11.5px;color:#7a7a7a;font-weight:normal;font-style:normal;white-space:nowrap;">GDT Callout</div>
<div style="left:767px;top:504px;width:181px;height:34px;background:#fff;border:1px solid #d0d0d0;box-sizing:border-box;"></div>
<div style="left:778px;top:512.6px;line-height:18px;height:18px;font-size:13.4px;color:#5e5e5e;font-weight:normal;font-style:normal;white-space:nowrap;overflow:hidden;width:163px">Range Inclusive</div>
<svg style="position:absolute;left:929px;top:518px;" width="8" height="6" viewBox="0 0 8 6"><path d="M1 1L4 4L7 1" fill="none" stroke="#333" stroke-width="1.3"/></svg>
<div style="left:947px;top:504px;width:179px;height:34px;background:#fff;border:1px solid #d0d0d0;box-sizing:border-box;"></div>
<div style="left:768px;top:543.1px;line-height:15px;height:15px;font-size:11.5px;color:#7a7a7a;font-weight:normal;font-style:normal;white-space:nowrap;">Low Specification</div>
<div style="left:947px;top:543.1px;line-height:15px;height:15px;font-size:11.5px;color:#7a7a7a;font-weight:normal;font-style:normal;white-space:nowrap;">High Specification</div>
<div style="left:767px;top:561px;width:181px;height:34px;background:#fff;border:1px solid #d0d0d0;box-sizing:border-box;"></div>
<div style="left:778px;top:569.6px;line-height:18px;height:18px;font-size:13.4px;color:#5e5e5e;font-weight:normal;font-style:normal;white-space:nowrap;overflow:hidden;width:163px">3.36</div>
<div style="left:947px;top:561px;width:179px;height:34px;background:#fff;border:1px solid #d0d0d0;box-sizing:border-box;"></div>
<div style="left:958px;top:569.6px;line-height:18px;height:18px;font-size:13.4px;color:#5e5e5e;font-weight:normal;font-style:normal;white-space:nowrap;overflow:hidden;width:161px">3.39</div>
<div style="left:1144px;top:462.1px;line-height:15px;height:15px;font-size:11.5px;color:#7a7a7a;font-weight:normal;font-style:normal;white-space:nowrap;">Measurement Type</div>
<div style="left:1144px;top:480px;width:140px;height:33px;background:#fff;border:1px solid #d0d0d0;box-sizing:border-box;"></div>
<div style="left:1155px;top:488.1px;line-height:18px;height:18px;font-size:13.4px;color:#5e5e5e;font-weight:normal;font-style:normal;white-space:nowrap;overflow:hidden;width:122px">Variable</div>
<svg style="position:absolute;left:1266px;top:493px;" width="8" height="6" viewBox="0 0 8 6"><path d="M1 1L4 4L7 1" fill="none" stroke="#333" stroke-width="1.3"/></svg>
<div style="left:1144px;top:518.1px;line-height:15px;height:15px;font-size:11.5px;color:#7a7a7a;font-weight:normal;font-style:normal;white-space:nowrap;">Results</div>
<div style="left:1144px;top:536px;width:140px;height:34px;background:#fff;border:1px solid #d0d0d0;box-sizing:border-box;background:#fff"></div>
<div style="left:1262px;top:536px;width:1px;height:34px;background:#d0d0d0"></div>
<div style="left:1269px;top:546.0px;line-height:14px;height:14px;font-size:11px;color:#555;font-weight:normal;font-style:normal;white-space:nowrap;">+</div>
<div style="left:1301px;top:490.1px;line-height:15px;height:15px;font-size:11.5px;color:#7a7a7a;font-weight:normal;font-style:normal;white-space:nowrap;">Tooling</div>
<div style="left:1301px;top:508px;width:217px;height:34px;background:#fff;border:1px solid #d0d0d0;box-sizing:border-box;"></div>
<div style="left:1312px;top:516.6px;line-height:18px;height:18px;font-size:13.4px;color:#5e5e5e;font-weight:normal;font-style:normal;white-space:nowrap;overflow:hidden;width:199px">CMM</div>
<div style="left:1536px;top:490.1px;line-height:15px;height:15px;font-size:11.5px;color:#7a7a7a;font-weight:normal;font-style:normal;white-space:nowrap;">Nonconformance</div>
<div style="left:1535px;top:508px;width:200px;height:34px;background:#fff;border:1px solid #d0d0d0;box-sizing:border-box;"></div>
<svg style="position:absolute;left:1767px;top:512px;" width="9" height="8" viewBox="0 0 9 8"><path d="M1 1L8 7M8 1L1 7" stroke="#d36a78" stroke-width="1.1"/></svg>
<svg style="position:absolute;left:1803px;top:509px;" width="12" height="13" viewBox="0 0 12 13"><path d="M1.3 9.5V2.6Q1.3 1.3 2.6 1.3H8.5" fill="none" stroke="#1d3d6b" stroke-width="1.1"/><rect x="3.2" y="2.6" width="7.3" height="9.4" rx="1.6" fill="#fff" stroke="#1d3d6b" stroke-width="1.2"/><path d="M4.5 2.6H9.5M4.5 12H9.5" stroke="#1d3d6b" stroke-width="1.6"/></svg>
<div style="left:49px;top:610px;width:1789px;height:51px;background:#fff;border-left:1px solid #dcdcdc;border-right:1px solid #dcdcdc;border-bottom:1px solid #dcdcdc;box-sizing:border-box"></div>
<div style="left:58px;top:618px;width:1771px;height:34px;background:#fff;border:1px solid #d0d0d0;box-sizing:border-box;"></div>
<div style="left:69px;top:626.0px;line-height:18px;height:18px;font-size:13.4px;color:#a9a9a9;font-weight:normal;font-style:italic;white-space:nowrap;">Comments</div>
<div style="left:49px;top:661px;width:1789px;height:186px;background:#f8f8f8;border-left:1px solid #dcdcdc;border-right:1px solid #dcdcdc;border-bottom:1px solid #dcdcdc;box-sizing:border-box"></div>
<div style="left:75px;top:661px;width:1px;height:186px;background:#dcdcdc"></div>
<div style="left:354px;top:661px;width:1px;height:186px;background:#dcdcdc"></div>
<div style="left:552px;top:661px;width:1px;height:186px;background:#dcdcdc"></div>
<div style="left:759px;top:661px;width:1px;height:186px;background:#dcdcdc"></div>
<div style="left:1135px;top:661px;width:1px;height:186px;background:#dcdcdc"></div>
<div style="left:1292px;top:661px;width:1px;height:186px;background:#dcdcdc"></div>
<div style="left:1527px;top:661px;width:1px;height:186px;background:#dcdcdc"></div>
<div style="left:1743px;top:661px;width:1px;height:186px;background:#dcdcdc"></div>
<div style="left:55px;top:746px;width:16px;height:16px;background:#fff;border:1px solid #a4a4a4;border-radius:3px;box-sizing:border-box"></div>
<div style="left:84px;top:695.1px;line-height:15px;height:15px;font-size:11.5px;color:#5f5f5f;font-weight:bold;font-style:normal;white-space:nowrap;">Char #</div>
<div style="left:286px;top:695.1px;line-height:15px;height:15px;font-size:11.15px;color:#7a7a7a;font-weight:normal;font-style:normal;white-space:nowrap;">Key Feature</div>
<div style="left:84px;top:712px;width:171px;height:34px;background:#fff;border:1px solid #d0d0d0;box-sizing:border-box;"></div>
<div style="left:95px;top:720.6px;line-height:18px;height:18px;font-size:13.4px;color:#5e5e5e;font-weight:normal;font-style:normal;white-space:nowrap;overflow:hidden;width:153px">2</div>
<div style="left:298px;top:718px;width:16px;height:16px;background:#fff;border:1px solid #a4a4a4;border-radius:3px;box-sizing:border-box"></div>
<div style="left:84px;top:751.1px;line-height:15px;height:15px;font-size:11.5px;color:#7a7a7a;font-weight:normal;font-style:normal;white-space:nowrap;">Op #</div>
<div style="left:84px;top:769px;width:262px;height:34px;background:#fff;border:1px solid #d0d0d0;box-sizing:border-box;"></div>
<div style="left:95px;top:777.6px;line-height:18px;height:18px;font-size:13.4px;color:#5e5e5e;font-weight:normal;font-style:normal;white-space:nowrap;overflow:hidden;width:244px">Op 10</div>
<div style="left:363px;top:695.1px;line-height:15px;height:15px;font-size:11.5px;color:#7a7a7a;font-weight:normal;font-style:normal;white-space:nowrap;">Reference Location</div>
<div style="left:363px;top:712px;width:181px;height:34px;background:#fff;border:1px solid #d0d0d0;box-sizing:border-box;"></div>
<div style="left:374px;top:720.6px;line-height:18px;height:18px;font-size:13.4px;color:#5e5e5e;font-weight:normal;font-style:normal;white-space:nowrap;overflow:hidden;width:159px">IX_Multi-Tool-B1_Tahoma:1</div>
<div style="left:363px;top:751.1px;line-height:15px;height:15px;font-size:11.5px;color:#7a7a7a;font-weight:normal;font-style:normal;white-space:nowrap;">Bubble Number</div>
<div style="left:363px;top:769px;width:181px;height:34px;background:#fff;border:1px solid #d0d0d0;box-sizing:border-box;"></div>
<div style="left:374px;top:777.6px;line-height:18px;height:18px;font-size:13.4px;color:#5e5e5e;font-weight:normal;font-style:normal;white-space:nowrap;overflow:hidden;width:163px">2</div>
<div style="left:561px;top:723.1px;line-height:15px;height:15px;font-size:11.5px;color:#7a7a7a;font-weight:normal;font-style:normal;white-space:nowrap;">Characteristic Designator</div>
<div style="left:561px;top:741px;width:190px;height:34px;background:#fff;border:1px solid #d0d0d0;box-sizing:border-box;"></div>
<div style="left:572px;top:749.6px;line-height:18px;height:18px;font-size:13.4px;color:#5e5e5e;font-weight:normal;font-style:normal;white-space:nowrap;overflow:hidden;width:172px">Critical</div>
<div style="left:768px;top:667.1px;line-height:15px;height:15px;font-size:11.5px;color:#7a7a7a;font-weight:normal;font-style:normal;white-space:nowrap;">Description</div>
<div style="left:1037px;top:667.1px;line-height:15px;height:15px;font-size:11.5px;color:#7a7a7a;font-weight:normal;font-style:normal;white-space:nowrap;">Units</div>
<div style="left:767px;top:685px;width:271px;height:34px;background:#fff;border:1px solid #d0d0d0;box-sizing:border-box;"></div>
<div style="left:778px;top:693.6px;line-height:18px;height:18px;font-size:13.4px;color:#5e5e5e;font-weight:normal;font-style:normal;white-space:nowrap;overflow:hidden;width:253px">Length</div>
<div style="left:1037px;top:685px;width:89px;height:34px;background:#fff;border:1px solid #d0d0d0;box-sizing:border-box;"></div>
<div style="left:1048px;top:693.6px;line-height:18px;height:18px;font-size:13.4px;color:#5e5e5e;font-weight:normal;font-style:normal;white-space:nowrap;overflow:hidden;width:71px">in</div>
<div style="left:768px;top:723.1px;line-height:15px;height:15px;font-size:11.5px;color:#7a7a7a;font-weight:normal;font-style:normal;white-space:nowrap;">Tolerance Type</div>
<div style="left:947px;top:723.1px;line-height:15px;height:15px;font-size:11.5px;color:#7a7a7a;font-weight:normal;font-style:normal;white-space:nowrap;">GDT Callout</div>
<div style="left:767px;top:741px;width:181px;height:34px;background:#fff;border:1px solid #d0d0d0;box-sizing:border-box;"></div>
<div style="left:778px;top:749.6px;line-height:18px;height:18px;font-size:13.4px;color:#5e5e5e;font-weight:normal;font-style:normal;white-space:nowrap;overflow:hidden;width:163px">Symmetrical</div>
<svg style="position:absolute;left:929px;top:755px;" width="8" height="6" viewBox="0 0 8 6"><path d="M1 1L4 4L7 1" fill="none" stroke="#333" stroke-width="1.3"/></svg>
<div style="left:947px;top:741px;width:179px;height:34px;background:#fff;border:1px solid #d0d0d0;box-sizing:border-box;"></div>
<div style="left:768px;top:780.1px;line-height:15px;height:15px;font-size:11.5px;color:#7a7a7a;font-weight:normal;font-style:normal;white-space:nowrap;">Nominal</div>
<div style="left:947px;top:780.1px;line-height:15px;height:15px;font-size:11.5px;color:#7a7a7a;font-weight:normal;font-style:normal;white-space:nowrap;">High / Low Tol</div>
<div style="left:767px;top:798px;width:181px;height:34px;background:#fff;border:1px solid #d0d0d0;box-sizing:border-box;"></div>
<div style="left:778px;top:806.6px;line-height:18px;height:18px;font-size:13.4px;color:#5e5e5e;font-weight:normal;font-style:normal;white-space:nowrap;overflow:hidden;width:163px">2.77</div>
<div style="left:947px;top:798px;width:179px;height:34px;background:#fff;border:1px solid #d0d0d0;box-sizing:border-box;"></div>
<div style="left:958px;top:806.6px;line-height:18px;height:18px;font-size:13.4px;color:#5e5e5e;font-weight:normal;font-style:normal;white-space:nowrap;overflow:hidden;width:161px">0.03</div>
<div style="left:1144px;top:699.1px;line-height:15px;height:15px;font-size:11.5px;color:#7a7a7a;font-weight:normal;font-style:normal;white-space:nowrap;">Measurement Type</div>
<div style="left:1144px;top:717px;width:140px;height:33px;background:#fff;border:1px solid #d0d0d0;box-sizing:border-box;"></div>
<div style="left:1155px;top:725.1px;line-height:18px;height:18px;font-size:13.4px;color:#5e5e5e;font-weight:normal;font-style:normal;white-space:nowrap;overflow:hidden;width:122px">Variable</div>
<svg style="position:absolute;left:1266px;top:730px;" width="8" height="6" viewBox="0 0 8 6"><path d="M1 1L4 4L7 1" fill="none" stroke="#333" stroke-width="1.3"/></svg>
<div style="left:1144px;top:755.1px;line-height:15px;height:15px;font-size:11.5px;color:#7a7a7a;font-weight:normal;font-style:normal;white-space:nowrap;">Results</div>
<div style="left:1144px;top:773px;width:140px;height:34px;background:#fff;border:1px solid #d0d0d0;box-sizing:border-box;background:#f6f6f6"></div>
<div style="left:1262px;top:773px;width:1px;height:34px;background:#d0d0d0"></div>
<div style="left:1269px;top:783.0px;line-height:14px;height:14px;font-size:11px;color:#555;font-weight:normal;font-style:normal;white-space:nowrap;">+</div>
<div style="left:1301px;top:727.1px;line-height:15px;height:15px;font-size:11.5px;color:#7a7a7a;font-weight:normal;font-style:normal;white-space:nowrap;">Tooling</div>
<div style="left:1301px;top:745px;width:217px;height:34px;background:#fff;border:1px solid #d0d0d0;box-sizing:border-box;"></div>
<div style="left:1312px;top:753.6px;line-height:18px;height:18px;font-size:13.4px;color:#5e5e5e;font-weight:normal;font-style:normal;white-space:nowrap;overflow:hidden;width:199px">CMM</div>
<div style="left:1536px;top:727.1px;line-height:15px;height:15px;font-size:11.5px;color:#7a7a7a;font-weight:normal;font-style:normal;white-space:nowrap;">Nonconformance</div>
<div style="left:1535px;top:745px;width:200px;height:34px;background:#fff;border:1px solid #d0d0d0;box-sizing:border-box;"></div>
<svg style="position:absolute;left:1767px;top:749px;" width="9" height="8" viewBox="0 0 9 8"><path d="M1 1L8 7M8 1L1 7" stroke="#d36a78" stroke-width="1.1"/></svg>
<svg style="position:absolute;left:1803px;top:746px;" width="12" height="13" viewBox="0 0 12 13"><path d="M1.3 9.5V2.6Q1.3 1.3 2.6 1.3H8.5" fill="none" stroke="#1d3d6b" stroke-width="1.1"/><rect x="3.2" y="2.6" width="7.3" height="9.4" rx="1.6" fill="#fff" stroke="#1d3d6b" stroke-width="1.2"/><path d="M4.5 2.6H9.5M4.5 12H9.5" stroke="#1d3d6b" stroke-width="1.6"/></svg>
<div style="left:49px;top:847px;width:1789px;height:51px;background:#f8f8f8;border-left:1px solid #dcdcdc;border-right:1px solid #dcdcdc;border-bottom:1px solid #dcdcdc;box-sizing:border-box"></div>
<div style="left:58px;top:855px;width:1771px;height:34px;background:#fff;border:1px solid #d0d0d0;box-sizing:border-box;"></div>
<div style="left:69px;top:863.0px;line-height:18px;height:18px;font-size:13.4px;color:#a9a9a9;font-weight:normal;font-style:italic;white-space:nowrap;">Comments</div>
<div style="left:49px;top:898px;width:1789px;height:186px;background:#fff;border-left:1px solid #dcdcdc;border-right:1px solid #dcdcdc;border-bottom:1px solid #dcdcdc;box-sizing:border-box"></div>
<div style="left:75px;top:898px;width:1px;height:186px;background:#dcdcdc"></div>
<div style="left:354px;top:898px;width:1px;height:186px;background:#dcdcdc"></div>
<div style="left:552px;top:898px;width:1px;height:186px;background:#dcdcdc"></div>
<div style="left:759px;top:898px;width:1px;height:186px;background:#dcdcdc"></div>
<div style="left:1135px;top:898px;width:1px;height:186px;background:#dcdcdc"></div>
<div style="left:1292px;top:898px;width:1px;height:186px;background:#dcdcdc"></div>
<div style="left:1527px;top:898px;width:1px;height:186px;background:#dcdcdc"></div>
<div style="left:1743px;top:898px;width:1px;height:186px;background:#dcdcdc"></div>
<div style="left:55px;top:983px;width:16px;height:16px;background:#fff;border:1px solid #a4a4a4;border-radius:3px;box-sizing:border-box"></div>
<div style="left:84px;top:932.1px;line-height:15px;height:15px;font-size:11.5px;color:#5f5f5f;font-weight:bold;font-style:normal;white-space:nowrap;">Char #</div>
<div style="left:286px;top:932.1px;line-height:15px;height:15px;font-size:11.15px;color:#7a7a7a;font-weight:normal;font-style:normal;white-space:nowrap;">Key Feature</div>
<div style="left:84px;top:949px;width:171px;height:34px;background:#fff;border:1px solid #d0d0d0;box-sizing:border-box;"></div>
<div style="left:95px;top:957.6px;line-height:18px;height:18px;font-size:13.4px;color:#5e5e5e;font-weight:normal;font-style:normal;white-space:nowrap;overflow:hidden;width:153px">3</div>
<div style="left:298px;top:955px;width:16px;height:16px;background:#fff;border:1px solid #a4a4a4;border-radius:3px;box-sizing:border-box"></div>
<div style="left:84px;top:988.1px;line-height:15px;height:15px;font-size:11.5px;color:#7a7a7a;font-weight:normal;font-style:normal;white-space:nowrap;">Op #</div>
<div style="left:84px;top:1006px;width:262px;height:34px;background:#fff;border:1px solid #d0d0d0;box-sizing:border-box;"></div>
<div style="left:95px;top:1014.6px;line-height:18px;height:18px;font-size:13.4px;color:#5e5e5e;font-weight:normal;font-style:normal;white-space:nowrap;overflow:hidden;width:244px">Op 10</div>
<div style="left:363px;top:932.1px;line-height:15px;height:15px;font-size:11.5px;color:#7a7a7a;font-weight:normal;font-style:normal;white-space:nowrap;">Reference Location</div>
<div style="left:363px;top:949px;width:181px;height:34px;background:#fff;border:1px solid #d0d0d0;box-sizing:border-box;"></div>
<div style="left:374px;top:957.6px;line-height:18px;height:18px;font-size:13.4px;color:#5e5e5e;font-weight:normal;font-style:normal;white-space:nowrap;overflow:hidden;width:159px">IX_Multi-Tool-B1_Tahoma:1</div>
<div style="left:363px;top:988.1px;line-height:15px;height:15px;font-size:11.5px;color:#7a7a7a;font-weight:normal;font-style:normal;white-space:nowrap;">Bubble Number</div>
<div style="left:363px;top:1006px;width:181px;height:34px;background:#fff;border:1px solid #d0d0d0;box-sizing:border-box;"></div>
<div style="left:374px;top:1014.6px;line-height:18px;height:18px;font-size:13.4px;color:#5e5e5e;font-weight:normal;font-style:normal;white-space:nowrap;overflow:hidden;width:163px">3</div>
<div style="left:561px;top:960.1px;line-height:15px;height:15px;font-size:11.5px;color:#7a7a7a;font-weight:normal;font-style:normal;white-space:nowrap;">Characteristic Designator</div>
<div style="left:561px;top:978px;width:190px;height:34px;background:#fff;border:1px solid #d0d0d0;box-sizing:border-box;"></div>
<div style="left:572px;top:986.6px;line-height:18px;height:18px;font-size:13.4px;color:#5e5e5e;font-weight:normal;font-style:normal;white-space:nowrap;overflow:hidden;width:172px">Critical</div>
<div style="left:768px;top:904.1px;line-height:15px;height:15px;font-size:11.5px;color:#7a7a7a;font-weight:normal;font-style:normal;white-space:nowrap;">Description</div>
<div style="left:1037px;top:904.1px;line-height:15px;height:15px;font-size:11.5px;color:#7a7a7a;font-weight:normal;font-style:normal;white-space:nowrap;">Units</div>
<div style="left:767px;top:922px;width:271px;height:34px;background:#fff;border:1px solid #d0d0d0;box-sizing:border-box;"></div>
<div style="left:778px;top:930.6px;line-height:18px;height:18px;font-size:13.4px;color:#5e5e5e;font-weight:normal;font-style:normal;white-space:nowrap;overflow:hidden;width:253px">Length (2.52)</div>
<div style="left:1037px;top:922px;width:89px;height:34px;background:#fff;border:1px solid #d0d0d0;box-sizing:border-box;"></div>
<div style="left:1048px;top:930.6px;line-height:18px;height:18px;font-size:13.4px;color:#5e5e5e;font-weight:normal;font-style:normal;white-space:nowrap;overflow:hidden;width:71px">in</div>
<div style="left:768px;top:960.1px;line-height:15px;height:15px;font-size:11.5px;color:#7a7a7a;font-weight:normal;font-style:normal;white-space:nowrap;">Tolerance Type</div>
<div style="left:947px;top:960.1px;line-height:15px;height:15px;font-size:11.5px;color:#7a7a7a;font-weight:normal;font-style:normal;white-space:nowrap;">GDT Callout</div>
<div style="left:767px;top:978px;width:181px;height:34px;background:#fff;border:1px solid #d0d0d0;box-sizing:border-box;"></div>
<div style="left:778px;top:986.6px;line-height:18px;height:18px;font-size:13.4px;color:#5e5e5e;font-weight:normal;font-style:normal;white-space:nowrap;overflow:hidden;width:163px">Symmetrical</div>
<svg style="position:absolute;left:929px;top:992px;" width="8" height="6" viewBox="0 0 8 6"><path d="M1 1L4 4L7 1" fill="none" stroke="#333" stroke-width="1.3"/></svg>
<div style="left:947px;top:978px;width:179px;height:34px;background:#fff;border:1px solid #d0d0d0;box-sizing:border-box;"></div>
<div style="left:768px;top:1017.1px;line-height:15px;height:15px;font-size:11.5px;color:#7a7a7a;font-weight:normal;font-style:normal;white-space:nowrap;">Nominal</div>
<div style="left:947px;top:1017.1px;line-height:15px;height:15px;font-size:11.5px;color:#7a7a7a;font-weight:normal;font-style:normal;white-space:nowrap;">High / Low Tol</div>
<div style="left:767px;top:1035px;width:181px;height:34px;background:#fff;border:1px solid #d0d0d0;box-sizing:border-box;"></div>
<div style="left:947px;top:1035px;width:179px;height:34px;background:#fff;border:1px solid #d0d0d0;box-sizing:border-box;"></div>
<div style="left:1144px;top:936.1px;line-height:15px;height:15px;font-size:11.5px;color:#7a7a7a;font-weight:normal;font-style:normal;white-space:nowrap;">Measurement Type</div>
<div style="left:1144px;top:954px;width:140px;height:33px;background:#fff;border:1px solid #d0d0d0;box-sizing:border-box;"></div>
<div style="left:1155px;top:962.1px;line-height:18px;height:18px;font-size:13.4px;color:#5e5e5e;font-weight:normal;font-style:normal;white-space:nowrap;overflow:hidden;width:122px">Not Reportable</div>
<svg style="position:absolute;left:1266px;top:967px;" width="8" height="6" viewBox="0 0 8 6"><path d="M1 1L4 4L7 1" fill="none" stroke="#333" stroke-width="1.3"/></svg>
<div style="left:1144px;top:992.1px;line-height:15px;height:15px;font-size:11.5px;color:#7a7a7a;font-weight:normal;font-style:normal;white-space:nowrap;">Results</div>
<div style="left:1163px;top:1018.0px;line-height:18px;height:18px;font-size:13.4px;color:#555;font-weight:normal;font-style:italic;white-space:nowrap;">Not Reportable</div>
<svg style="position:absolute;left:1767px;top:986px;" width="9" height="8" viewBox="0 0 9 8"><path d="M1 1L8 7M8 1L1 7" stroke="#d36a78" stroke-width="1.1"/></svg>
<svg style="position:absolute;left:1803px;top:983px;" width="12" height="13" viewBox="0 0 12 13"><path d="M1.3 9.5V2.6Q1.3 1.3 2.6 1.3H8.5" fill="none" stroke="#1d3d6b" stroke-width="1.1"/><rect x="3.2" y="2.6" width="7.3" height="9.4" rx="1.6" fill="#fff" stroke="#1d3d6b" stroke-width="1.2"/><path d="M4.5 2.6H9.5M4.5 12H9.5" stroke="#1d3d6b" stroke-width="1.6"/></svg>
<div style="left:49px;top:1084px;width:1789px;height:51px;background:#fff;border-left:1px solid #dcdcdc;border-right:1px solid #dcdcdc;border-bottom:1px solid #dcdcdc;box-sizing:border-box"></div>
<div style="left:58px;top:1092px;width:1771px;height:34px;background:#fff;border:1px solid #d0d0d0;box-sizing:border-box;"></div>
<div style="left:69px;top:1100.0px;line-height:18px;height:18px;font-size:13.4px;color:#a9a9a9;font-weight:normal;font-style:italic;white-space:nowrap;">Comments</div>
<svg style="position:absolute;left:668.5px;top:499px;" width="14" height="22" viewBox="0 0 14 22"><path d="M1 1V17L4.8 13.3L7.5 19.5L10 18.4L7.4 12.4H12.5Z" fill="#fff" stroke="#111" stroke-width="1" stroke-linejoin="round"/></svg>
</div></body></html>
